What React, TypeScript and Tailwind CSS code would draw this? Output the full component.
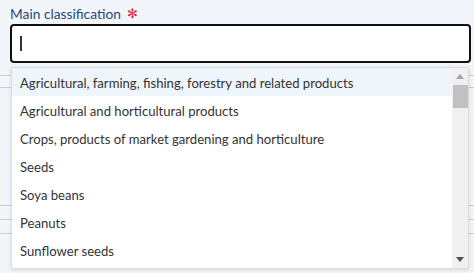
import React from "react";

const items = [
  "Agricultural, farming, fishing, forestry and related products",
  "Agricultural and horticultural products",
  "Crops, products of market gardening and horticulture",
  "Seeds",
  "Soya beans",
  "Peanuts",
  "Sunflower seeds",
];

export default function App() {
  return (
    <div
      className="relative w-[474px] h-[273px] overflow-hidden bg-[#f2f5f9]"
      style={{ fontFamily: 'Lato, "Open Sans", sans-serif' }}
    >
      <div className="px-[10px] pt-[4px]">
        <div className="flex items-center gap-[6px] text-[13.75px] leading-[19px] text-[#24497c]">
          <span>Main classification</span>
          <span className="text-[#e0293b] text-[13px]">✻</span>
        </div>
        <div className="mt-[1px] h-[39px] w-[461px] rounded-[4px] border-2 border-[#111] bg-white flex items-center pl-[8px]">
          <div className="w-[1.5px] h-[15px] bg-[#333]" />
        </div>
        {/* underlying page content (table lines) */}
        <div className="mt-[12px] -mx-[10px] flex flex-col">
          <div className="h-[12px] border-t border-[#c8ccd2]" />
          <div className="h-[118px] border-t border-[#c8ccd2]" />
          <div className="h-[14px] border-t border-[#c8ccd2]" />
          <div className="h-[14px] border-t border-[#c8ccd2]" />
          <div className="border-t border-[#c8ccd2]" />
        </div>
      </div>

      <div className="absolute left-[11px] top-[67px] w-[458px] h-[202px] bg-white border border-[#dcdcdc] shadow-[0_1px_4px_rgba(0,0,0,0.12)] flex">
        <div className="flex-1 flex flex-col">
          {items.map((t, i) => (
            <div
              key={t}
              className={`h-[28px] shrink-0 flex items-center pl-[8px] pt-[4px] text-[13.1px] text-[#333] ${
                i === 0 ? "bg-[#eef5fb]" : "bg-white"
              }`}
            >
              {t}
            </div>
          ))}
        </div>
        <div className="w-[16px] bg-[#f0f0f0] flex flex-col items-center">
          <div className="h-[17px] flex items-center justify-center">
            <svg width="8" height="5" viewBox="0 0 8 5">
              <path d="M0 5 L4 0 L8 5 Z" fill="#a3a3a3" />
            </svg>
          </div>
          <div className="w-[15px] h-[23px] bg-[#c1c1c1]" />
          <div className="flex-1" />
          <div className="h-[17px] flex items-center justify-center">
            <svg width="8" height="5" viewBox="0 0 8 5">
              <path d="M0 0 L8 0 L4 5 Z" fill="#505050" />
            </svg>
          </div>
        </div>
      </div>
    </div>
  );
}
